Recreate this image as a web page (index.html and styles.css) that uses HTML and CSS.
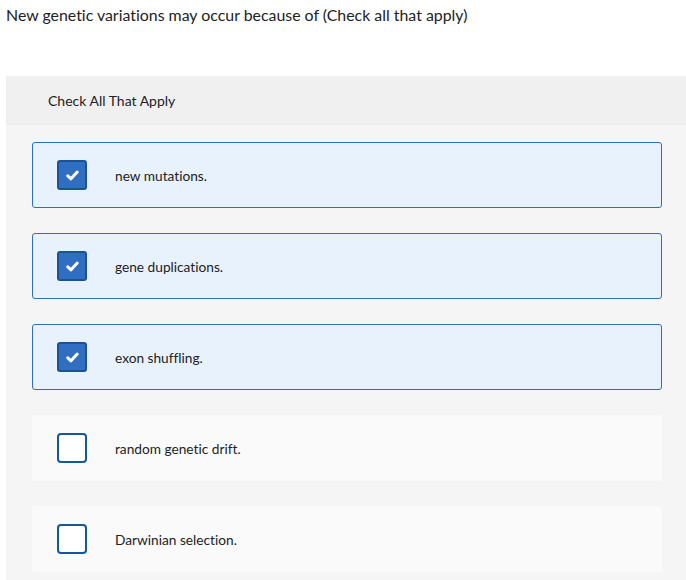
FILE: index.html
```html
<!DOCTYPE html>
<html>
<head>
<meta charset="utf-8">
<link rel="stylesheet" href="styles.css">
</head>
<body>
<p class="prompt">New genetic variations may occur because of (Check all that apply)</p>
<section class="panel">
  <div class="panel-head">Check All That Apply</div>
  <div class="choices">
    <label class="choice checked">
      <span class="box"><svg viewBox="0 0 13 11" width="13" height="11"><path d="M1.8 5.8 L5 8.8 L11.2 2" fill="none" stroke="#fff" stroke-width="3" stroke-linecap="round" stroke-linejoin="round"/></svg></span>
      <span class="text">new mutations.</span>
    </label>
    <label class="choice checked">
      <span class="box"><svg viewBox="0 0 13 11" width="13" height="11"><path d="M1.8 5.8 L5 8.8 L11.2 2" fill="none" stroke="#fff" stroke-width="3" stroke-linecap="round" stroke-linejoin="round"/></svg></span>
      <span class="text">gene duplications.</span>
    </label>
    <label class="choice checked">
      <span class="box"><svg viewBox="0 0 13 11" width="13" height="11"><path d="M1.8 5.8 L5 8.8 L11.2 2" fill="none" stroke="#fff" stroke-width="3" stroke-linecap="round" stroke-linejoin="round"/></svg></span>
      <span class="text">exon shuffling.</span>
    </label>
    <label class="choice">
      <span class="box"></span>
      <span class="text">random genetic drift.</span>
    </label>
    <label class="choice">
      <span class="box"></span>
      <span class="text">Darwinian selection.</span>
    </label>
  </div>
</section>
</body>
</html>
```

FILE: styles.css
```css
html, body {
  margin: 0;
  padding: 0;
  background: #ffffff;
}
body {
  font-family: Lato, "Open Sans", sans-serif;
  font-variant-ligatures: none;
  color: #1f1f1f;
  width: 686px;
  height: 580px;
  overflow: hidden;
}
.prompt {
  margin: 0;
  padding: 5px 0 0 6px;
  font-size: 15.9px;
  line-height: 20px;
  color: #222;
}
.panel {
  margin: 51px 0 0 6px;
  background: #f5f5f5;
  padding-bottom: 20px;
}
.panel-head {
  background: #f0f0f0;
  height: 49px;
  display: flex;
  align-items: center;
  padding-left: 42px;
  font-size: 14px;
  color: #222;
}
.choices {
  display: flex;
  flex-direction: column;
  gap: 25px;
  padding: 17px 24px 0 26px;
}
.choice {
  height: 66px;
  box-sizing: border-box;
  display: flex;
  align-items: center;
  background: #fafafa;
  border-radius: 3px;
  padding-left: 25px;
}
.choice.checked {
  background: #e8f2fc;
  border: 1px solid #2c6fc2;
  padding-left: 24px;
}
.box {
  width: 30px;
  height: 30px;
  box-sizing: border-box;
  border: 2px solid #155797;
  border-radius: 4px;
  background: #ffffff;
  display: flex;
  align-items: center;
  justify-content: center;
  flex: none;
}
.checked .box {
  background: #2f6ec0;
  border-color: #1b5294;
  border-radius: 3px;
}
.text {
  margin-left: 28px;
  font-size: 13.7px;
  color: #222;
}
```
